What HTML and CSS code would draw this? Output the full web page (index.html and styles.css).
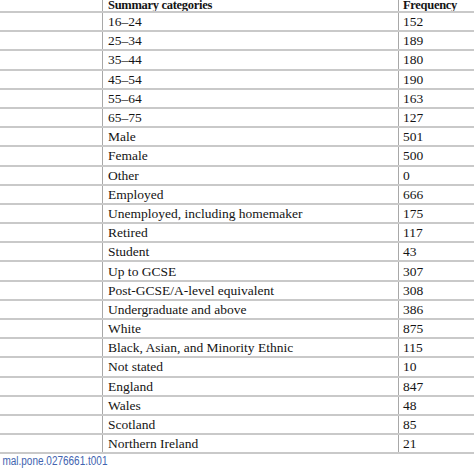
FILE: index.html
```html
<!DOCTYPE html>
<html>
<head>
<meta charset="utf-8">
<link rel="stylesheet" href="styles.css">
</head>
<body>
<div class="page">
<table class="tbl">
<thead>
<tr class="head"><th class="c0"></th><th class="c1">Summary categories</th><th class="c2">Frequency</th></tr>
</thead>
<tbody>
<tr><td class="c0"></td><td class="c1">16–24</td><td class="c2">152</td></tr>
<tr><td class="c0"></td><td class="c1">25–34</td><td class="c2">189</td></tr>
<tr><td class="c0"></td><td class="c1">35–44</td><td class="c2">180</td></tr>
<tr><td class="c0"></td><td class="c1">45–54</td><td class="c2">190</td></tr>
<tr><td class="c0"></td><td class="c1">55–64</td><td class="c2">163</td></tr>
<tr><td class="c0"></td><td class="c1">65–75</td><td class="c2">127</td></tr>
<tr><td class="c0"></td><td class="c1">Male</td><td class="c2">501</td></tr>
<tr><td class="c0"></td><td class="c1">Female</td><td class="c2">500</td></tr>
<tr><td class="c0"></td><td class="c1">Other</td><td class="c2">0</td></tr>
<tr><td class="c0"></td><td class="c1">Employed</td><td class="c2">666</td></tr>
<tr><td class="c0"></td><td class="c1">Unemployed, including homemaker</td><td class="c2">175</td></tr>
<tr><td class="c0"></td><td class="c1">Retired</td><td class="c2">117</td></tr>
<tr><td class="c0"></td><td class="c1">Student</td><td class="c2">43</td></tr>
<tr><td class="c0"></td><td class="c1">Up to GCSE</td><td class="c2">307</td></tr>
<tr><td class="c0"></td><td class="c1">Post-GCSE/A-level equivalent</td><td class="c2">308</td></tr>
<tr><td class="c0"></td><td class="c1">Undergraduate and above</td><td class="c2">386</td></tr>
<tr><td class="c0"></td><td class="c1">White</td><td class="c2">875</td></tr>
<tr><td class="c0"></td><td class="c1">Black, Asian, and Minority Ethnic</td><td class="c2">115</td></tr>
<tr><td class="c0"></td><td class="c1">Not stated</td><td class="c2">10</td></tr>
<tr><td class="c0"></td><td class="c1">England</td><td class="c2">847</td></tr>
<tr><td class="c0"></td><td class="c1">Wales</td><td class="c2">48</td></tr>
<tr><td class="c0"></td><td class="c1">Scotland</td><td class="c2">85</td></tr>
<tr><td class="c0"></td><td class="c1">Northern Ireland</td><td class="c2">21</td></tr>
</tbody>
</table>
<div class="doi">mal.pone.0276661.t001</div>
</div>
</body>
</html>
```
FILE: styles.css
```css
html, body {
  margin: 0;
  padding: 0;
  background: #ffffff;
  overflow: hidden;
}
.page {
  width: 474px;
  height: 474px;
  overflow: hidden;
}
.tbl {
  width: 474px;
  border-collapse: collapse;
  table-layout: fixed;
  margin-top: -1px;
  font-family: "Liberation Serif", "Times New Roman", serif;
  font-size: 13.5px;
  color: #141414;
}
.tbl th, .tbl td {
  padding: 0;
  border-bottom: 2px solid #c9c9c9;
  text-align: left;
  vertical-align: middle;
  white-space: nowrap;
  overflow: hidden;
}
.tbl .head th {
  height: 12px;
  font-weight: bold;
  font-size: 12.5px;
  letter-spacing: -0.3px;
  vertical-align: bottom;
  line-height: 12px;
}
.tbl td {
  height: 16.2px;
  line-height: 16px;
  padding-top: 1px;
}
.c0 { width: 102px; }
.c1 {
  width: 296px;
  border-left: 1px solid #a8a8a8;
  padding-left: 5px !important;
  box-sizing: border-box;
}
.c2 {
  border-left: 1px solid #a8a8a8;
  padding-left: 4px !important;
}
.doi {
  margin-top: 1px;
  padding-left: 3px;
  font-family: "Liberation Sans", Arial, sans-serif;
  font-size: 12.5px;
  color: #4264b0;
  line-height: 13px;
  transform: scaleX(0.8);
  transform-origin: left center;
  white-space: nowrap;
}
```
